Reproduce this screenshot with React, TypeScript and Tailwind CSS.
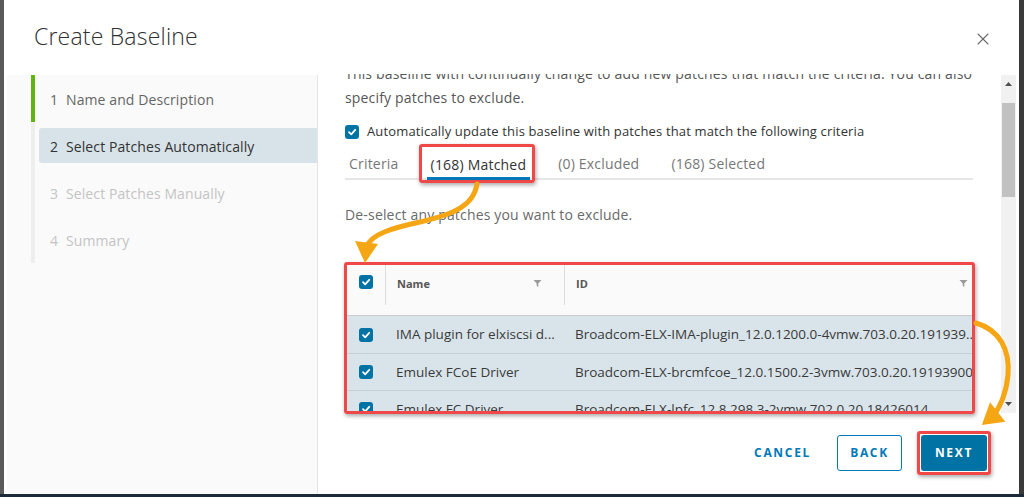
import { X } from 'lucide-react';

const FONT = { fontFamily: '"Open Sans", "Liberation Sans", sans-serif' };

const STEPS = [
  { n: 1, label: 'Name and Description', state: 'done' },
  { n: 2, label: 'Select Patches Automatically', state: 'active' },
  { n: 3, label: 'Select Patches Manually', state: 'todo' },
  { n: 4, label: 'Summary', state: 'todo' },
];

const ROWS = [
  { name: 'IMA plugin for elxiscsi d...', id: 'Broadcom-ELX-IMA-plugin_12.0.1200.0-4vmw.703.0.20.191939...' },
  { name: 'Emulex FCoE Driver', id: 'Broadcom-ELX-brcmfcoe_12.0.1500.2-3vmw.703.0.20.19193900' },
  { name: 'Emulex FC Driver', id: 'Broadcom-ELX-lpfc_12.8.298.3-2vmw.702.0.20.18426014' },
];

function Check({ size = 14 }: { size?: number }) {
  return (
    <span
      className="flex items-center justify-center rounded-[3px] bg-[#0072a3] shrink-0"
      style={{ width: size, height: size }}
    >
      <svg width="10" height="10" viewBox="0 0 10 10">
        <path d="M2 5.2 L4.2 7.3 L8.2 2.8" fill="none" stroke="white" strokeWidth="1.8" strokeLinecap="round" strokeLinejoin="round" />
      </svg>
    </span>
  );
}

function Funnel() {
  return (
    <svg width="9" height="9" viewBox="0 0 9 9">
      <path d="M0.5 1 H8.5 L5.3 4.6 V8 L3.7 7 V4.6 Z" fill="#9a9a9a" />
    </svg>
  );
}

function StepNav() {
  return (
    <div className="ml-[3px] mt-[7px] w-[311px] shrink-0 bg-[#fafafa] border-r border-[#e4e4e4]">
      <div className="ml-[24px]">
        {STEPS.map((s) => (
          <div key={s.n} className="flex h-[47px]">
            <div className={`w-[4px] shrink-0 ${s.state === 'done' ? 'bg-[#60b515]' : 'bg-[#eeeeee]'}`} />
            <div
              className={`ml-[4px] flex-1 flex items-center pl-[11px] pt-[2px] text-[14px] tracking-[0.1px] ${
                s.state === 'active'
                  ? 'my-[6px] bg-[#d8e3e9] rounded-l-[3px] text-[#333333]'
                  : s.state === 'done'
                  ? 'text-[#666666]'
                  : 'text-[#c4c4c4]'
              }`}
            >
              <span className="w-[16px]">{s.n}</span>
              <span>{s.label}</span>
            </div>
          </div>
        ))}
      </div>
    </div>
  );
}

function Tabs() {
  const tabs = ['Criteria', '(168) Matched', '(0) Excluded', '(168) Selected'];
  return (
    <div className="mt-[6px] flex h-[32px] border-b-[2px] border-[#e6e6e6] text-[14px] tracking-[0.2px]">
      {tabs.map((t, i) => (
        <div
          key={t}
          className={`flex items-center px-[4px] mr-[24px] ${
            i === 1 ? 'text-[#333333] border-b-[3px] border-[#0079b8] -mb-[2px] pt-[3px]' : 'text-[#777777]'
          }`}
        >
          {t}
        </div>
      ))}
    </div>
  );
}

function PatchTable() {
  return (
    <div className="mt-[39px] w-[628px] border border-[#cccccc] rounded-[3px] overflow-hidden">
      <div className="flex h-[51px] bg-[#fafafa] border-b border-[#cccccc] text-[11px] font-bold text-[#565656]">
        <div className="w-[39px] flex pt-[10px] pl-[13px]">
          <Check />
        </div>
        <div className="w-[179px] flex justify-between pl-[11px] pr-[22px] pt-[11px] border-l border-[#dddddd] mb-[10px]">
          <span>Name</span>
          <span className="pt-[3px]"><Funnel /></span>
        </div>
        <div className="flex-1 flex justify-between pl-[11px] pr-[4px] pt-[11px] border-l border-[#dddddd] mb-[10px]">
          <span>ID</span>
          <span className="pt-[3px]"><Funnel /></span>
        </div>
      </div>
      {ROWS.map((r, i) => (
        <div key={r.id} className={`flex h-[37px] bg-[#d9e4ea] text-[13.5px] text-[#3a3a3a] ${i > 0 ? 'border-t border-[#c5cfd5]' : ''}`}>
          <div className="w-[39px] flex items-center pl-[13px]">
            <Check />
          </div>
          <div className="w-[179px] flex items-center pl-[11px] whitespace-nowrap overflow-hidden">{r.name}</div>
          <div className="flex-1 flex items-center pl-[11px] whitespace-nowrap overflow-hidden">{r.id}</div>
        </div>
      ))}
    </div>
  );
}

function Scrollbar() {
  return (
    <div className="mt-[7px] w-[15px] h-[338px] bg-[#f1f1f1] flex flex-col items-center shrink-0">
      <div className="h-[18px] flex items-center justify-center">
        <svg width="7" height="4" viewBox="0 0 7 4"><path d="M0 4 L3.5 0 L7 4 Z" fill="#505050" /></svg>
      </div>
      <div className="mt-[10px] w-[13px] h-[94px] bg-[#c1c1c1]" />
      <div className="flex-1" />
      <div className="h-[18px] flex items-center justify-center">
        <svg width="7" height="4" viewBox="0 0 7 4"><path d="M0 0 L3.5 4 L7 0 Z" fill="#505050" /></svg>
      </div>
    </div>
  );
}

function Annotations() {
  return (
    <div className="absolute inset-0 pointer-events-none">
      <div className="absolute left-[419px] top-[144px] w-[116px] h-[39px] border-[3px] border-[#f04848] rounded-[3px] shadow-[1px_2px_4px_rgba(0,0,0,0.35)]" />
      <div className="absolute left-[344px] top-[262px] w-[631px] h-[152px] border-[3px] border-[#f04848] rounded-[3px] shadow-[1px_2px_4px_rgba(0,0,0,0.35)]" />
      <div className="absolute left-[917px] top-[431px] w-[74px] h-[44px] border-[3px] border-[#f04848] rounded-[3px] shadow-[1px_2px_4px_rgba(0,0,0,0.35)]" />
      <svg className="absolute left-0 top-0" width="1024" height="497" viewBox="0 0 1024 497">
        <path d="M477 184 C474 205 455 214 420 222 C392 228 372 234 367 246" fill="none" stroke="#f5a615" strokeWidth="5" strokeLinecap="round" />
        <path d="M355 241 L378 244 L365 263 Z" fill="#f5a615" />
        <path d="M976 323 C1000 330 1010 350 1008 375 C1006 395 1000 405 995 414" fill="none" stroke="#f5a615" strokeWidth="5" strokeLinecap="round" />
        <path d="M985 405 L1006 418 L985 429 Z" fill="#f5a615" transform="rotate(20 995 418)" />
      </svg>
    </div>
  );
}

export default function App() {
  return (
    <div className="relative w-[1024px] h-[497px] overflow-hidden bg-[#4a4a4a] flex flex-col" style={FONT}>
      <div className="flex h-[494px]">
        <div className="w-[4px] bg-[#5a5a5a]" />
        <div className="w-[1015px] bg-white flex flex-col">
          {/* Header */}
          <div className="h-[68px] shrink-0 flex items-start justify-between pl-[30px] pr-[26px] pt-[19px]">
            <h1 className="text-[23px] font-light text-[#313131] tracking-[0.2px]">Create Baseline</h1>
            <X size={20} strokeWidth={1.3} className="text-[#6a6a6a] mt-[10px]" />
          </div>
          {/* Body */}
          <div className="flex flex-1 min-h-0">
            <StepNav />
            <div className="flex-1 flex flex-col min-w-0">
              <div className="flex h-[345px]">
                <div className="flex-1 overflow-hidden pl-[27px] pr-[28px] mt-[6px]">
                  <div className="-mt-[12px] text-[14px] text-[#565656] leading-[24px] tracking-[0.17px]">
                    <p className="whitespace-nowrap">
                      This baseline with continually change to add new patches that match the criteria. You can also
                    </p>
                    <p>specify patches to exclude.</p>
                  </div>
                  <div className="mt-[12px] h-[20px] flex items-center gap-[8px] text-[13px] text-[#333333] tracking-[0.15px]">
                    <Check />
                    <span>Automatically update this baseline with patches that match the following criteria</span>
                  </div>
                  <Tabs />
                  <p className="mt-[25px] h-[20px] leading-[20px] text-[14px] text-[#6a6a6a] tracking-[0.17px]">
                    De-select any patches you want to exclude.
                  </p>
                  <PatchTable />
                </div>
                <Scrollbar />
                <div className="w-[3px]" />
              </div>
              {/* Footer */}
              <div className="flex-1 flex items-start justify-end pr-[32px] pt-[22px]">
                <button className="h-[36px] px-[12px] mr-[14px] text-[12px] font-bold tracking-[0.14em] text-[#0079b8]">
                  CANCEL
                </button>
                <button className="h-[36px] w-[65px] mr-[19px] border border-[#0079b8] rounded-[3px] text-[12px] font-bold tracking-[0.14em] text-[#0079b8]">
                  BACK
                </button>
                <button className="h-[36px] w-[66px] bg-[#0072a3] rounded-[3px] text-[12px] font-bold tracking-[0.14em] text-white">
                  NEXT
                </button>
              </div>
            </div>
          </div>
        </div>
        <div className="flex-1 bg-[#3a3a3a]" />
      </div>
      <div className="flex-1 bg-[#1c2a38]" />
      <Annotations />
    </div>
  );
}
